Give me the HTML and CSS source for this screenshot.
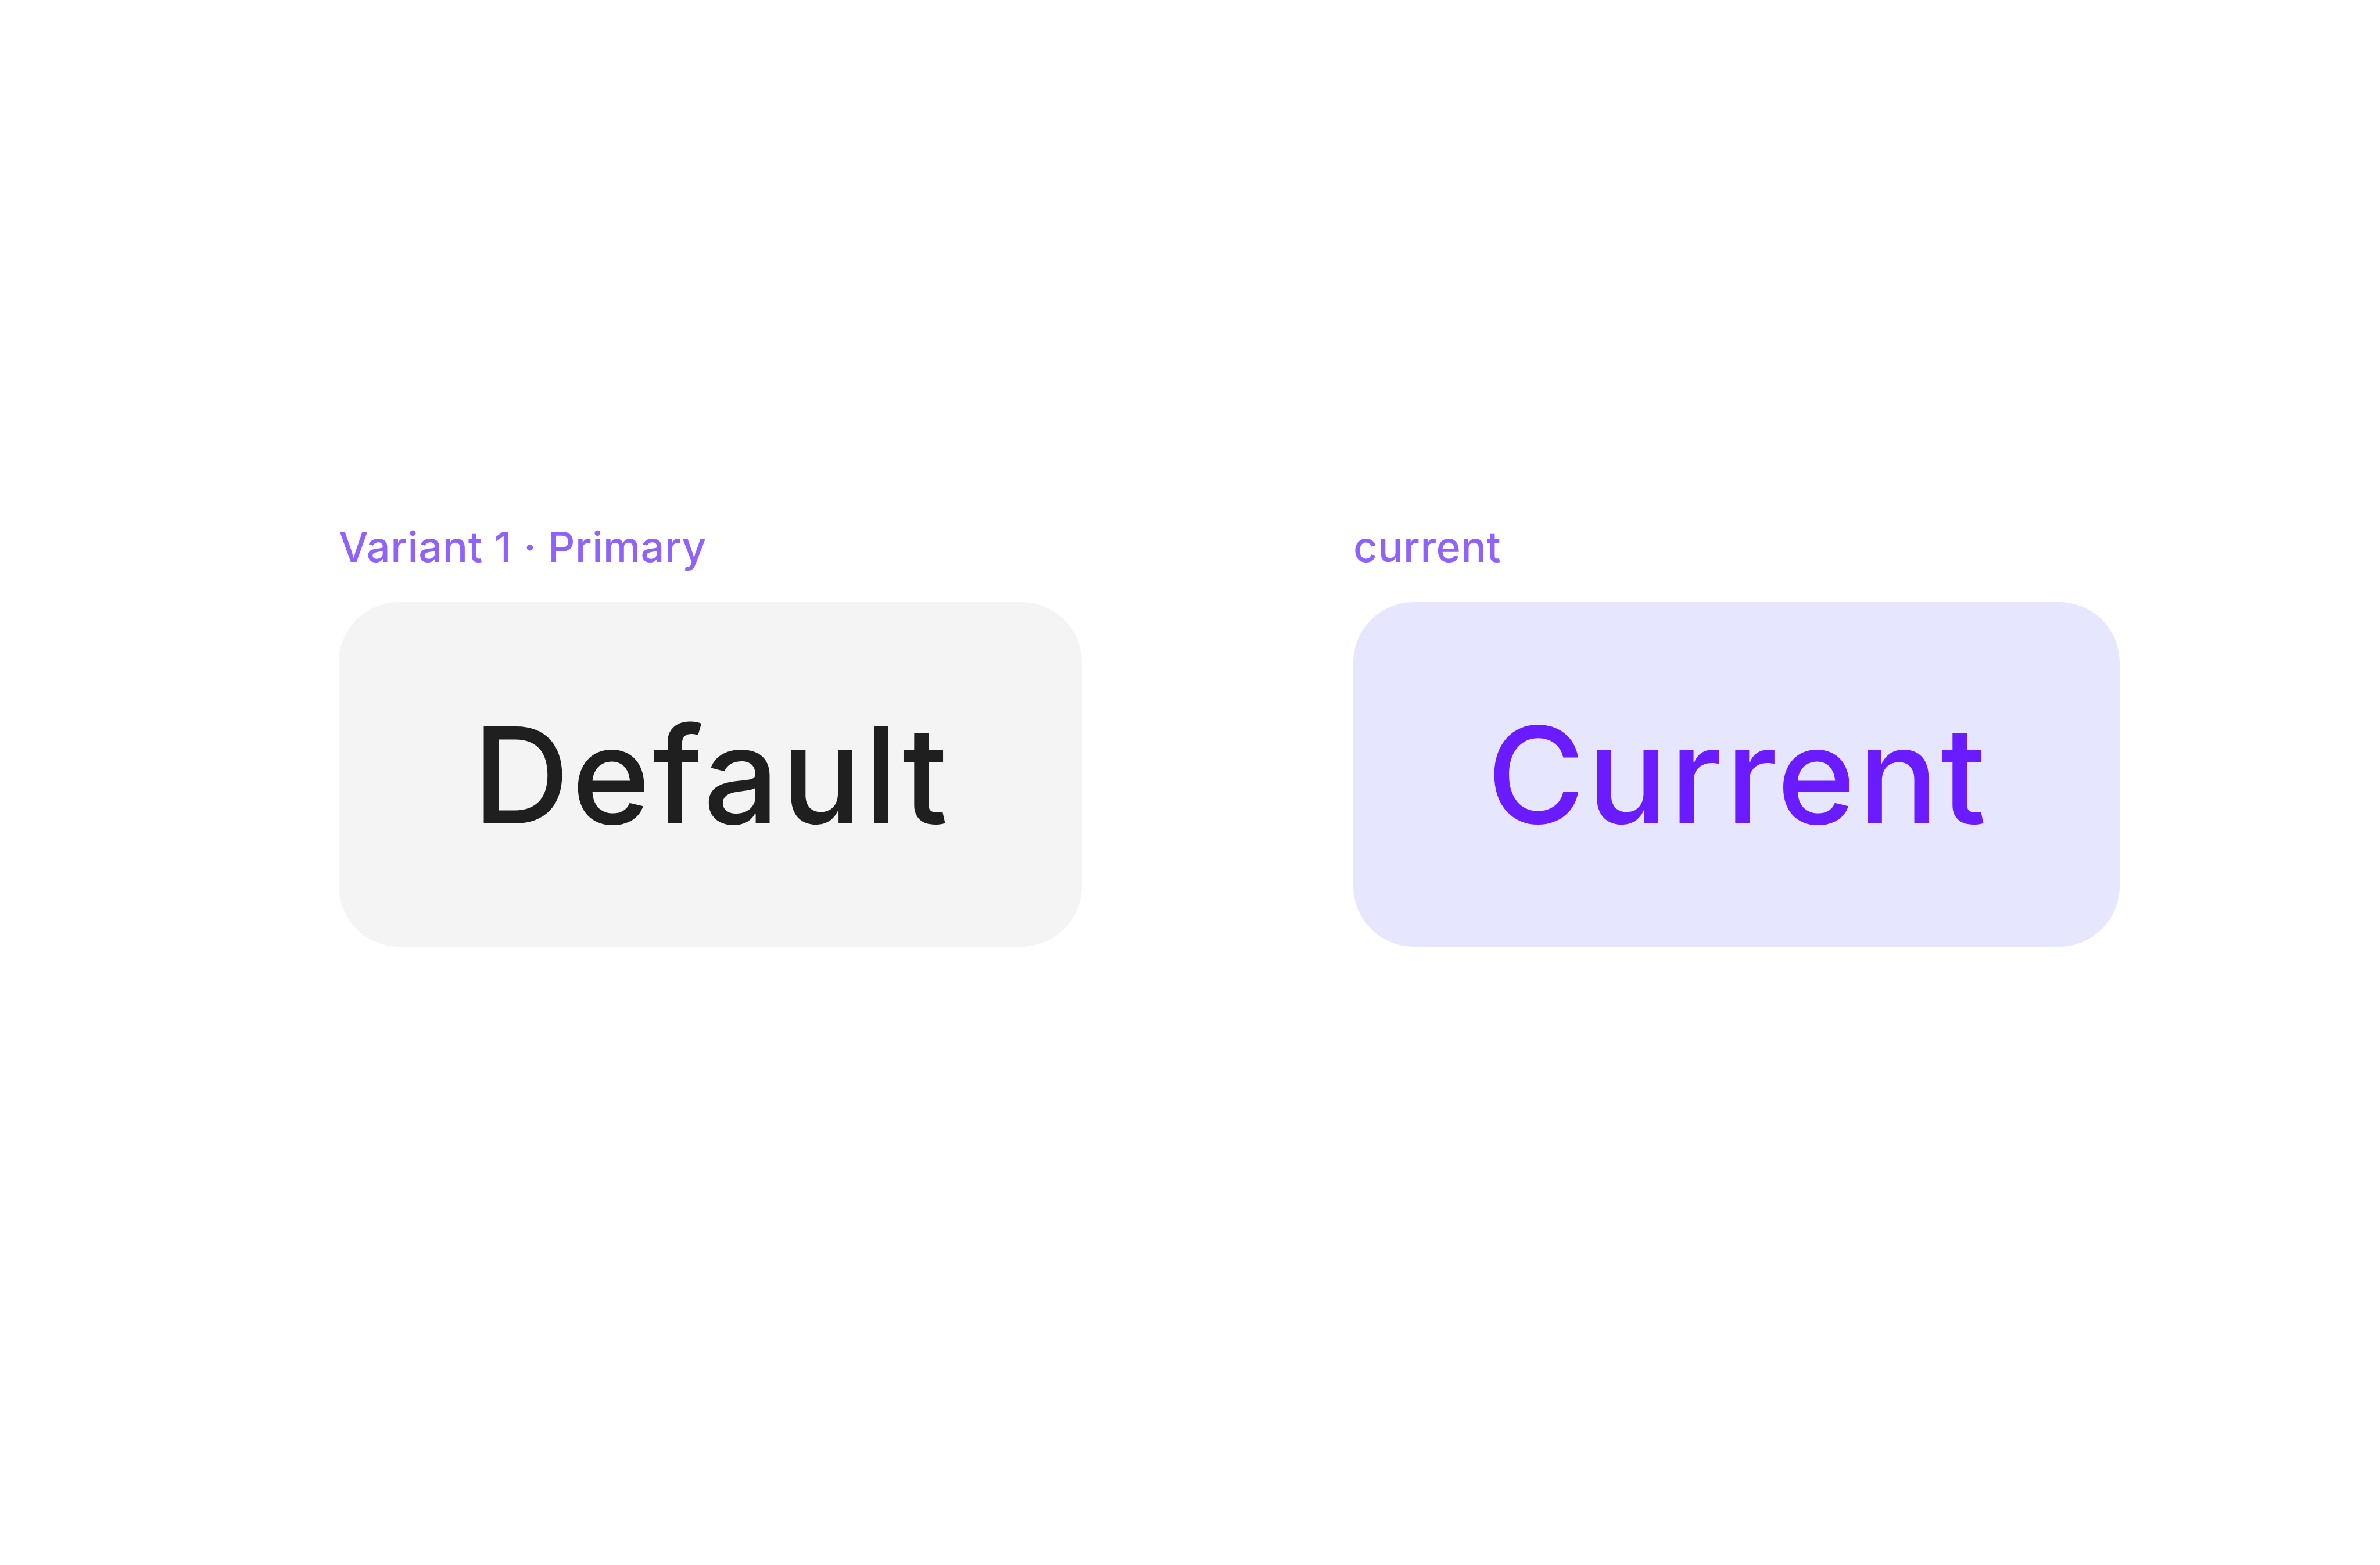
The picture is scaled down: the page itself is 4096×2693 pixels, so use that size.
FILE: index.html
```html
<!DOCTYPE html>
<html lang="en">
<head>
<meta charset="utf-8">
<title>Variants</title>
<link rel="stylesheet" href="styles.css">
</head>
<body>
<main class="canvas">
  <section class="variant">
    <div class="label">Variant 1 · Primary</div>
    <div class="button button-default">Default</div>
  </section>
  <section class="variant">
    <div class="label">current</div>
    <div class="button button-current">Current</div>
  </section>
</main>
</body>
</html>
```

FILE: styles.css
```css
html, body {
  margin: 0;
  padding: 0;
  background: #ffffff;
}

body {
  width: 4096px;
  height: 2693px;
  font-family: Inter, "Noto Sans", sans-serif;
}

.canvas {
  display: flex;
  align-items: flex-start;
  gap: 467px;
  padding: 897px 0 0 583px;
}

.variant {
  display: flex;
  flex-direction: column;
  gap: 51px;
}

.label {
  font-size: 72px;
  line-height: 88px;
  font-weight: 500;
  color: #8f62fb;
  letter-spacing: 0.6px;
}

.button {
  height: 593px;
  border-radius: 104px;
  display: flex;
  align-items: center;
  justify-content: center;
  font-size: 230px;
  line-height: 1;
  font-weight: 500;
  letter-spacing: 4px;
  text-indent: 4px;
}

.button-default {
  width: 1279px;
  background: #f4f4f4;
  color: #1f1f1f;
}

.button-current {
  width: 1319px;
  background: #e6e6fe;
  color: #6a1bff;
}
```
